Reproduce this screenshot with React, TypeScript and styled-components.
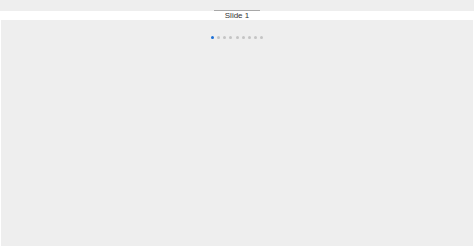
import React from "react";
import styled, { createGlobalStyle } from "styled-components";

const GlobalStyle = createGlobalStyle`
  html, body {
    margin: 0;
    padding: 0;
    background: #ffffff;
    font-family: "Liberation Sans", Arial, sans-serif;
  }
`;

const Page = styled.div`
  display: flex;
  flex-direction: column;
  width: 474px;
  height: 248px;
`;

const TopBand = styled.div`
  height: 11px;
  background: #eeeeee;
`;

const SlideStrip = styled.div`
  height: 9px;
  display: flex;
  justify-content: center;
  background: #ffffff;
`;

const SlideLabel = styled.div`
  width: 46px;
  border-top: 1px solid #a8a8a8;
  margin-top: -1px;
  text-align: center;
  font-size: 8px;
  line-height: 9px;
  color: #333333;
`;

const Stage = styled.div`
  flex: 1;
  margin: 0 1px 2px 1px;
  background: #eeeeee;
  display: flex;
  justify-content: center;
  padding-top: 16px;
`;

const Dots = styled.div`
  display: flex;
  gap: 3.1px;
  height: 3px;
`;

const Dot = styled.span<{ $active?: boolean }>`
  width: 3px;
  height: 3px;
  border-radius: 50%;
  background: ${(p) => (p.$active ? "#1b6fd6" : "#c4c4c4")};
`;

const App = () => {
  const slides = Array.from({ length: 9 }, (_, i) => i);
  return (
    <Page>
      <GlobalStyle />
      <TopBand />
      <SlideStrip>
        <SlideLabel>Slide 1</SlideLabel>
      </SlideStrip>
      <Stage>
        <Dots>
          {slides.map((i) => (
            <Dot key={i} $active={i === 0} />
          ))}
        </Dots>
      </Stage>
    </Page>
  );
};

export default App;
